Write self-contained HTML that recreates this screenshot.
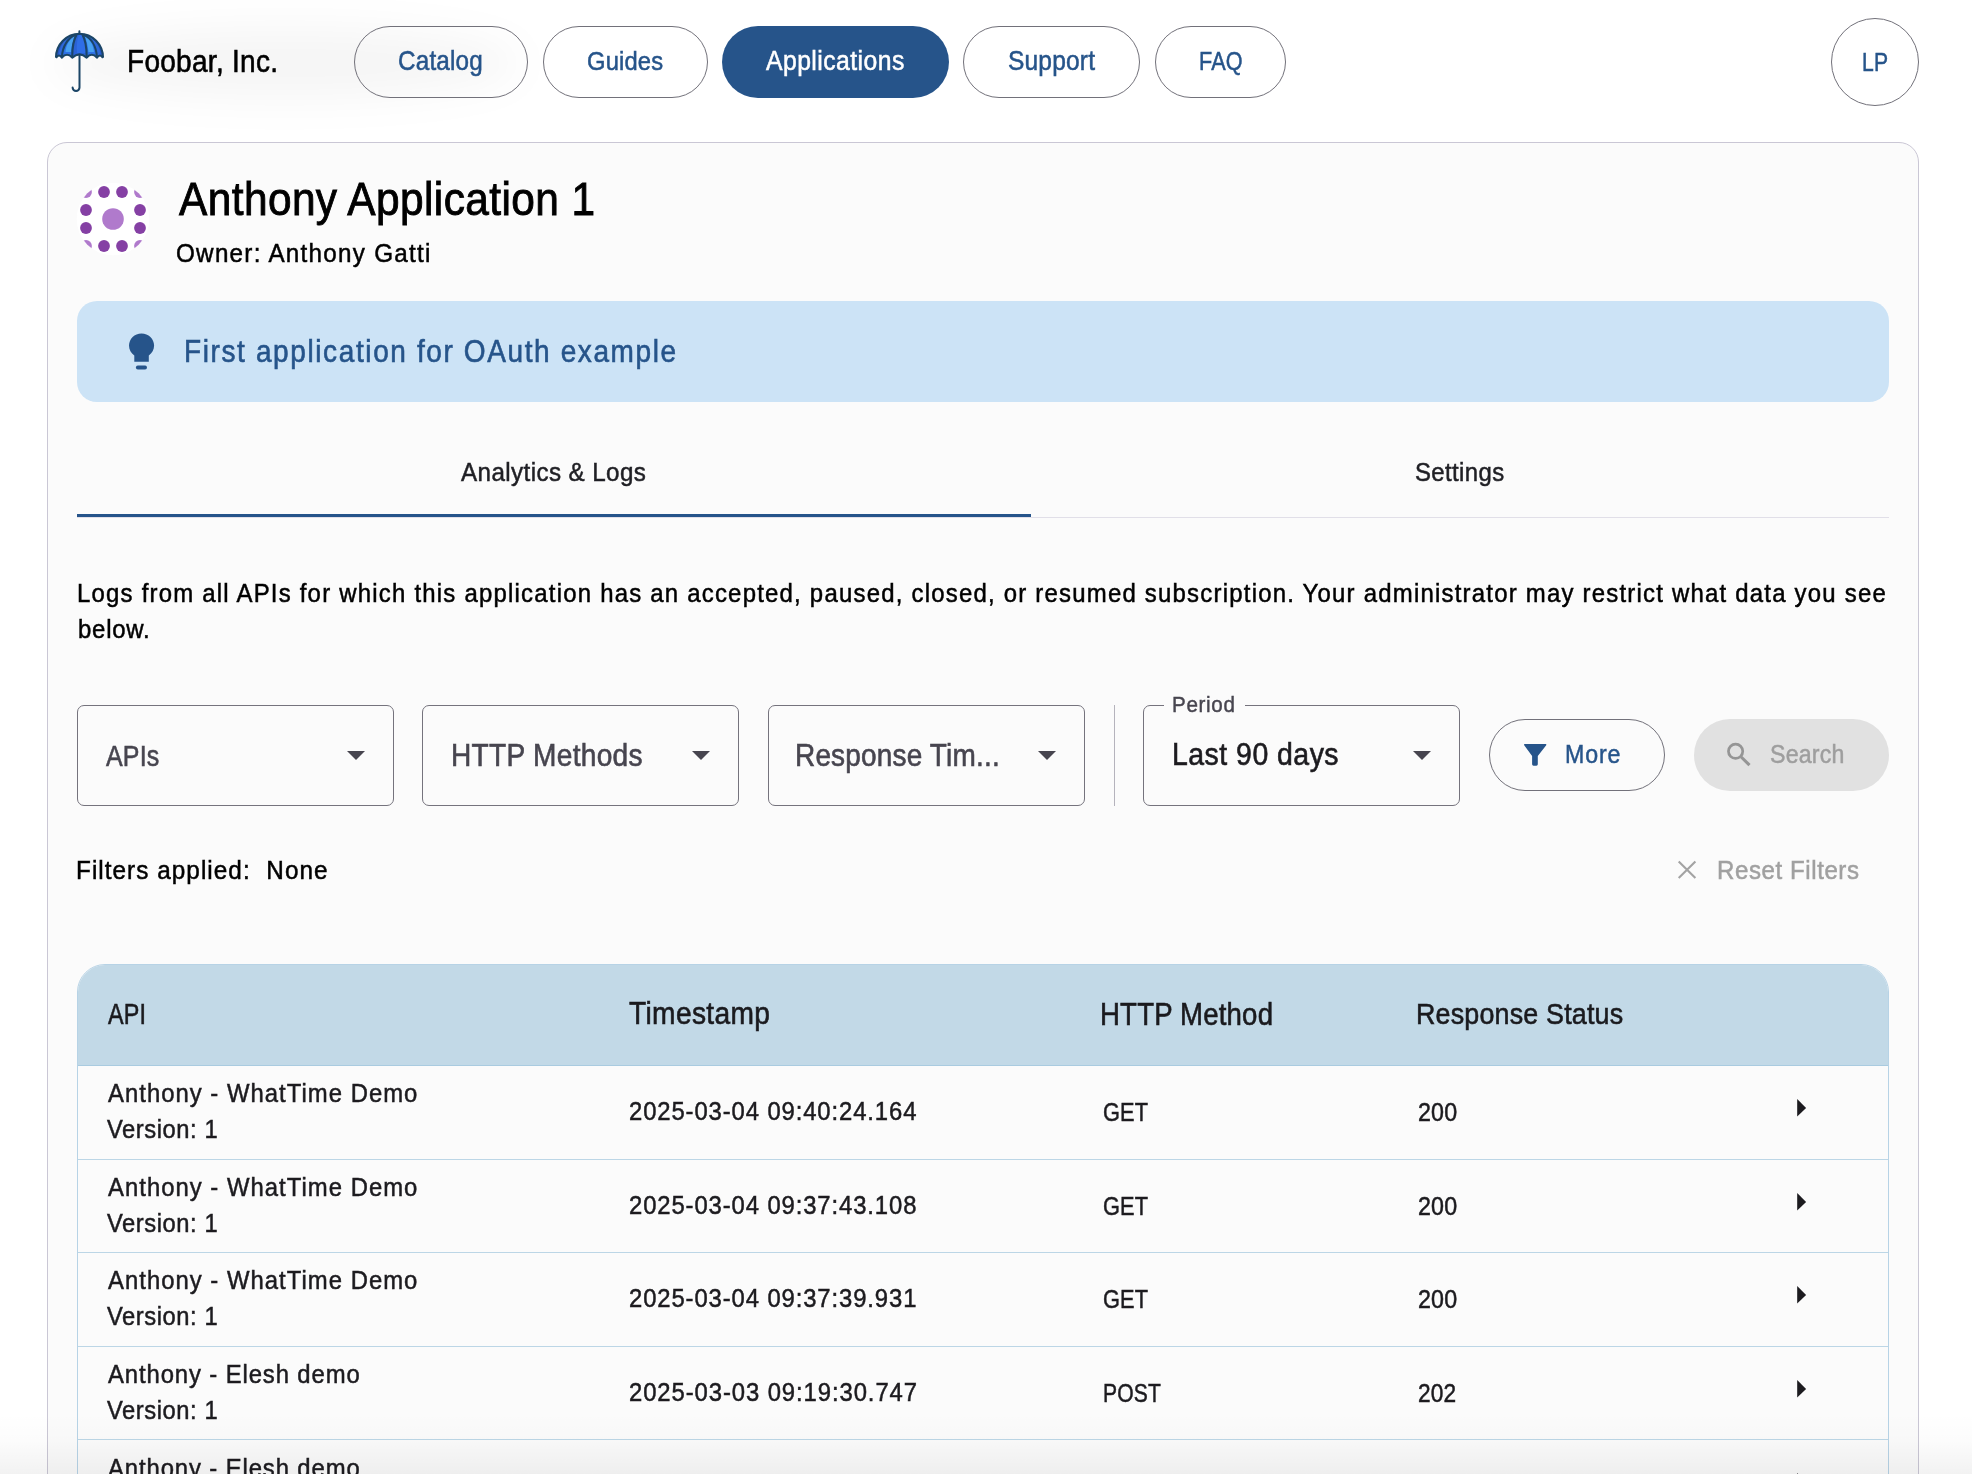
<!DOCTYPE html><html><head><meta charset="utf-8"><style>
html,body{margin:0;padding:0;}
body{width:1972px;height:1474px;position:relative;overflow:hidden;background:#fff;font-family:"Liberation Sans",sans-serif;}
.t{position:absolute;white-space:pre;}
.b{position:absolute;box-sizing:border-box;}
svg{position:absolute;overflow:visible;}
</style></head><body>
<div class="b" style="left:50px;top:28px;width:470px;height:70px;border-radius:50%;background:rgba(0,0,0,0.038);filter:blur(20px);"></div>
<svg style="left:50px;top:28px" width="60" height="68" viewBox="0 0 60 68">
<defs><clipPath id="dome"><path d="M6 29.5 A23.5 23.8 0 0 1 53 29.5 Q50 25.3 46.9 29.2 Q41.8 24 36.7 29.2 Q29.5 23.2 22.2 29.2 Q17 24 11.9 29.2 Q9 25.3 6 29.5 Z"/></clipPath></defs>
<g clip-path="url(#dome)">
<rect x="0" y="0" width="60" height="32" fill="#2455c0"/>
<path d="M8.5 29 C9 19 14 11 22 7.5 L24 7.5 C17 11.5 12.5 19 11.9 29 Z" fill="#2f68d8"/>
<path d="M51 29 C50.5 19 45.5 11 37.5 7.5 L35.5 7.5 C42.5 11.5 46.5 19 46.9 29 Z" fill="#2f68d8"/>
<path d="M11.9 29 C12.5 18 18 10 25.5 6.8 L26.6 6.6 C24 11 22.2 18 22.2 29 Z" fill="#2f72e6"/>
<path d="M15.5 24 C16 17 19.5 11 25 7.5 C23 12 21.5 18 21 24 Z" fill="#48a2f2"/>
<path d="M22.2 29 C22.2 18 24 11 26.6 6.6 L32.4 6.6 C35 11 36.7 18 36.7 29 Z" fill="#2b62d4"/>
<path d="M27 25 C26.5 18 27 11 29 6.6 L32.4 6.6 C35 11 36.7 18 36.7 25 Z" fill="#2f6ee6"/>
<path d="M36.7 29 C36.7 18 35 11 32.4 6.6 L33.7 6.8 C41 10 46.3 18 46.9 29 Z" fill="#2f72e6"/>
<path d="M38.5 24 C38 18 36.5 12 34.5 7.5 C40 11 43.5 17 44 24 Z" fill="#48a2f2"/>
</g>
<path d="M6 29.5 A23.5 23.8 0 0 1 53 29.5" fill="none" stroke="#1b4566" stroke-width="2.1"/>
<path d="M11.9 29 C12.5 18 18 10 25.5 6.8 M22.2 29 C22.2 18 24 11 26.6 6.6 M36.7 29 C36.7 18 35 11 32.4 6.6 M46.9 29 C46.3 18 41 10 33.7 6.8" fill="none" stroke="#1b4566" stroke-width="2.1"/>
<path d="M6 29.8 Q9 25.3 11.9 29.6 Q17 24 22.2 29.6 Q29.5 23.2 36.7 29.6 Q41.8 24 46.9 29.6 Q50 25.3 53 29.8" fill="none" stroke="#1b4566" stroke-width="2.1" stroke-linejoin="round"/>
<path d="M29.4 3.2 V6 M29.5 27 V59.5 A3.45 3.45 0 0 1 22.6 59.5" fill="none" stroke="#1b4566" stroke-width="2" stroke-linecap="round"/>
</svg>
<div class="t " style="left:126.67px;top:45.83px;font-size:30.45px;line-height:30.45px;color:#000;-webkit-text-stroke:0.60px #000;letter-spacing:0.309px;transform:scaleX(0.9200);transform-origin:0 0;">Foobar, Inc.</div>
<div class="b" style="left:354px;top:26px;width:174px;height:72px;border-radius:36px;border:1px solid #72717a;"></div>
<div class="t " style="left:398.44px;top:47.88px;font-size:26.72px;line-height:26.72px;color:#26548a;-webkit-text-stroke:0.52px #26548a;letter-spacing:0.200px;transform:scaleX(0.9080);transform-origin:0 0;">Catalog</div>
<div class="b" style="left:543px;top:26px;width:165px;height:72px;border-radius:36px;border:1px solid #72717a;"></div>
<div class="t " style="left:587.03px;top:47.96px;font-size:26.62px;line-height:26.62px;color:#26548a;-webkit-text-stroke:0.52px #26548a;letter-spacing:0.200px;transform:scaleX(0.8922);transform-origin:0 0;">Guides</div>
<div class="b" style="left:722px;top:26px;width:227px;height:72px;border-radius:36px;background:#26548a;"></div>
<div class="t " style="left:766.14px;top:47.71px;font-size:26.92px;line-height:26.92px;color:#fff;-webkit-text-stroke:0.53px #fff;letter-spacing:0.482px;transform:scaleX(0.9200);transform-origin:0 0;">Applications</div>
<div class="b" style="left:963px;top:26px;width:177px;height:72px;border-radius:36px;border:1px solid #72717a;"></div>
<div class="t " style="left:1007.94px;top:47.83px;font-size:26.79px;line-height:26.79px;color:#26548a;-webkit-text-stroke:0.52px #26548a;letter-spacing:0.200px;transform:scaleX(0.9160);transform-origin:0 0;">Support</div>
<div class="b" style="left:1155px;top:26px;width:131px;height:72px;border-radius:36px;border:1px solid #72717a;"></div>
<div class="t " style="left:1199.01px;top:48.32px;font-size:26.21px;line-height:26.21px;color:#26548a;-webkit-text-stroke:0.51px #26548a;letter-spacing:0.200px;transform:scaleX(0.8266);transform-origin:0 0;">FAQ</div>
<div class="b" style="left:1831px;top:18px;width:88px;height:88px;border-radius:50%;border:1px solid #72717a;"></div>
<div class="t " style="left:1862.41px;top:49.42px;font-size:26.08px;line-height:26.08px;color:#26548a;-webkit-text-stroke:0.51px #26548a;letter-spacing:0.200px;transform:scaleX(0.8096);transform-origin:0 0;">LP</div>
<div class="b" style="left:47px;top:142px;width:1872px;height:1400px;border-radius:20px;border:1px solid #cac7d5;background:#fbfbfb;"></div>
<svg style="left:0;top:0" width="200" height="300" viewBox="0 0 200 300">
<defs><clipPath id="cc"><circle cx="113" cy="219" r="36.3"/></clipPath></defs>
<circle cx="113" cy="219" r="36.3" fill="#fff"/>
<g clip-path="url(#cc)"><circle cx="86" cy="192" r="5.9" fill="#b07acc"/><circle cx="140" cy="192" r="5.9" fill="#b07acc"/><circle cx="86" cy="246" r="5.9" fill="#b07acc"/><circle cx="140" cy="246" r="5.9" fill="#b07acc"/></g><circle cx="104" cy="192" r="5.9" fill="#8540a4"/><circle cx="122" cy="192" r="5.9" fill="#8540a4"/><circle cx="86" cy="210" r="5.9" fill="#8540a4"/><circle cx="140" cy="210" r="5.9" fill="#8540a4"/><circle cx="86" cy="228" r="5.9" fill="#8540a4"/><circle cx="140" cy="228" r="5.9" fill="#8540a4"/><circle cx="104" cy="246" r="5.9" fill="#8540a4"/><circle cx="122" cy="246" r="5.9" fill="#8540a4"/><circle cx="113" cy="219" r="10.8" fill="#b07acc"/>
</svg>
<div class="t " style="left:179.01px;top:175.77px;font-size:46.11px;line-height:46.11px;color:#000;-webkit-text-stroke:0.90px #000;letter-spacing:0.439px;transform:scaleX(0.9200);transform-origin:0 0;">Anthony Application 1</div>
<div class="t " style="left:176.24px;top:240.40px;font-size:26.34px;line-height:26.34px;color:#000;-webkit-text-stroke:0.52px #000;letter-spacing:1.384px;transform:scaleX(0.9200);transform-origin:0 0;">Owner: Anthony Gatti</div>
<div class="b" style="left:77px;top:301px;width:1812px;height:101px;border-radius:20px;background:#cce3f6;"></div>
<svg style="left:120px;top:328px" width="40" height="48" viewBox="0 0 40 48">
<path d="M21.5 5.4 C14.5 5.4 9 10.8 9 17.6 C9 21.8 11.1 25.2 14.3 27.6 L14.3 33.8 L28.8 33.8 L28.8 27.6 C32 25.2 34.1 21.8 34.1 17.6 C34.1 10.8 28.5 5.4 21.5 5.4 Z" fill="#26548a"/>
<rect x="15.9" y="37.6" width="11.1" height="3.8" rx="1.9" fill="#26548a"/>
</svg>
<div class="t " style="left:184.47px;top:335.53px;font-size:30.45px;line-height:30.45px;color:#26548a;-webkit-text-stroke:0.60px #26548a;letter-spacing:1.752px;transform:scaleX(0.9200);transform-origin:0 0;">First application for OAuth example</div>
<div class="t " style="left:461.14px;top:459.12px;font-size:26.32px;line-height:26.32px;color:#1f1f24;-webkit-text-stroke:0.51px #1f1f24;letter-spacing:0.430px;transform:scaleX(0.9200);transform-origin:0 0;">Analytics &amp; Logs</div>
<div class="t " style="left:1415.03px;top:459.48px;font-size:26.01px;line-height:26.01px;color:#1f1f24;-webkit-text-stroke:0.51px #1f1f24;letter-spacing:0.413px;transform:scaleX(0.9200);transform-origin:0 0;">Settings</div>
<div class="b" style="left:77px;top:517px;width:1812px;height:1px;background:#e1dfe8;"></div>
<div class="b" style="left:77px;top:514px;width:954px;height:3px;background:#26548a;"></div>
<div class="t " style="left:77.23px;top:580.18px;font-size:26.02px;line-height:26.02px;color:#000;-webkit-text-stroke:0.51px #000;letter-spacing:1.328px;transform:scaleX(0.9200);transform-origin:0 0;">Logs from all APIs for which this application has an accepted, paused, closed, or resumed subscription. Your administrator may restrict what data you see</div>
<div class="t " style="left:78.23px;top:616.28px;font-size:26.02px;line-height:26.02px;color:#000;-webkit-text-stroke:0.51px #000;letter-spacing:0.820px;transform:scaleX(0.9200);transform-origin:0 0;">below.</div>
<div class="b" style="left:77px;top:705px;width:317px;height:101px;border-radius:7px;border:1px solid #75737d;"></div>
<div class="t " style="left:106.04px;top:740.51px;font-size:30.11px;line-height:30.11px;color:#47454f;-webkit-text-stroke:0.59px #47454f;letter-spacing:0.200px;transform:scaleX(0.8290);transform-origin:0 0;">APIs</div>
<svg style="left:347px;top:751px" width="18" height="9" viewBox="0 0 18 9"><path d="M0 0 H18 L9 9 Z" fill="#47454f"/></svg>
<div class="b" style="left:422px;top:705px;width:317px;height:101px;border-radius:7px;border:1px solid #75737d;"></div>
<div class="t " style="left:450.68px;top:740.12px;font-size:30.57px;line-height:30.57px;color:#47454f;-webkit-text-stroke:0.60px #47454f;letter-spacing:0.299px;transform:scaleX(0.9200);transform-origin:0 0;">HTTP Methods</div>
<svg style="left:692px;top:751px" width="18" height="9" viewBox="0 0 18 9"><path d="M0 0 H18 L9 9 Z" fill="#47454f"/></svg>
<div class="b" style="left:768px;top:705px;width:317px;height:101px;border-radius:7px;border:1px solid #75737d;"></div>
<div class="t " style="left:795.07px;top:740.16px;font-size:30.53px;line-height:30.53px;color:#47454f;-webkit-text-stroke:0.60px #47454f;letter-spacing:0.200px;transform:scaleX(0.9166);transform-origin:0 0;">Response Tim...</div>
<svg style="left:1038px;top:751px" width="18" height="9" viewBox="0 0 18 9"><path d="M0 0 H18 L9 9 Z" fill="#47454f"/></svg>
<div class="b" style="left:1114px;top:705px;width:1px;height:101px;background:#b5b3bc;"></div>
<div class="b" style="left:1143px;top:705px;width:317px;height:101px;border-radius:7px;border:1px solid #75737d;"></div>
<div class="b" style="left:1164px;top:700px;width:81px;height:10px;background:#fbfbfb;"></div>
<div class="t " style="left:1171.60px;top:693.73px;font-size:22.41px;line-height:22.41px;color:#47454f;-webkit-text-stroke:0.44px #47454f;letter-spacing:0.718px;transform:scaleX(0.9200);transform-origin:0 0;">Period</div>
<div class="t " style="left:1171.68px;top:740.32px;font-size:30.93px;line-height:30.93px;color:#1c1b1f;-webkit-text-stroke:0.61px #1c1b1f;letter-spacing:0.522px;transform:scaleX(0.9200);transform-origin:0 0;">Last 90 days</div>
<svg style="left:1413px;top:751px" width="18" height="9" viewBox="0 0 18 9"><path d="M0 0 H18 L9 9 Z" fill="#47454f"/></svg>
<div class="b" style="left:1489px;top:719px;width:176px;height:72px;border-radius:36px;border:1px solid #72717a;"></div>
<svg style="left:1520px;top:740px" width="30" height="30" viewBox="0 0 30 30">
<path d="M4.6 4.1 H25.8 Q26.8 4.1 26.2 5.2 L17.8 15.9 V24.3 Q17.8 25.7 16.4 25.7 H13.5 Q12.1 25.7 12.1 24.3 V15.9 L4.2 5.2 Q3.6 4.1 4.6 4.1 Z" fill="#26548a"/>
</svg>
<div class="t " style="left:1564.63px;top:741.96px;font-size:25.21px;line-height:25.21px;color:#26548a;-webkit-text-stroke:0.49px #26548a;letter-spacing:0.912px;transform:scaleX(0.9200);transform-origin:0 0;">More</div>
<div class="b" style="left:1694px;top:719px;width:195px;height:72px;border-radius:36px;background:#e1e1e1;"></div>
<svg style="left:1720px;top:735px" width="40" height="40" viewBox="0 0 40 40">
<circle cx="15.6" cy="16.3" r="7.15" fill="none" stroke="#959595" stroke-width="2.7"/>
<path d="M21.2 22 L29.5 30.1" stroke="#959595" stroke-width="3.1"/>
</svg>
<div class="t " style="left:1770.03px;top:741.99px;font-size:25.18px;line-height:25.18px;color:#9e9e9e;-webkit-text-stroke:0.49px #9e9e9e;letter-spacing:0.233px;transform:scaleX(0.9200);transform-origin:0 0;">Search</div>
<div class="t " style="left:76.44px;top:856.72px;font-size:26.43px;line-height:26.43px;color:#000;-webkit-text-stroke:0.52px #000;letter-spacing:1.131px;transform:scaleX(0.9200);transform-origin:0 0;">Filters applied:  None</div>
<svg style="left:1667px;top:850px" width="40" height="40" viewBox="0 0 40 40">
<path d="M11.7 11.4 L28.4 28.1 M28.4 11.4 L11.7 28.1" stroke="#a3a3a3" stroke-width="2.1"/>
</svg>
<div class="t " style="left:1717.24px;top:857.04px;font-size:26.18px;line-height:26.18px;color:#a0a0a0;-webkit-text-stroke:0.51px #a0a0a0;letter-spacing:0.620px;transform:scaleX(0.9200);transform-origin:0 0;">Reset Filters</div>
<div class="b" style="left:77px;top:964px;width:1812px;height:600px;border:1px solid #b7d3e6;border-radius:28px 28px 0 0;background:#fbfbfb;overflow:hidden;"></div>
<div class="b" style="left:78px;top:965px;width:1810px;height:100px;background:#c2d9e7;border-radius:27px 27px 0 0;"></div>
<div class="b" style="left:78px;top:1065px;width:1810px;height:1px;background:#a9cbe0;"></div>
<div class="t " style="left:107.63px;top:998.83px;font-size:29.86px;line-height:29.86px;color:#1a1a1e;-webkit-text-stroke:0.58px #1a1a1e;letter-spacing:0.200px;transform:scaleX(0.7819);transform-origin:0 0;">API</div>
<div class="t " style="left:628.88px;top:998.37px;font-size:30.63px;line-height:30.63px;color:#1a1a1e;-webkit-text-stroke:0.60px #1a1a1e;letter-spacing:0.372px;transform:scaleX(0.9200);transform-origin:0 0;">Timestamp</div>
<div class="t " style="left:1100.27px;top:998.53px;font-size:30.44px;line-height:30.44px;color:#1a1a1e;-webkit-text-stroke:0.60px #1a1a1e;letter-spacing:0.200px;transform:scaleX(0.9061);transform-origin:0 0;">HTTP Method</div>
<div class="t " style="left:1416.06px;top:998.61px;font-size:30.35px;line-height:30.35px;color:#1a1a1e;-webkit-text-stroke:0.59px #1a1a1e;letter-spacing:0.200px;transform:scaleX(0.8857);transform-origin:0 0;">Response Status</div>
<div class="t " style="left:107.73px;top:1080.83px;font-size:25.95px;line-height:25.95px;color:#1c1b1f;-webkit-text-stroke:0.51px #1c1b1f;letter-spacing:1.111px;transform:scaleX(0.9200);transform-origin:0 0;">Anthony - WhatTime Demo</div>
<div class="t " style="left:107.13px;top:1116.96px;font-size:25.80px;line-height:25.80px;color:#1c1b1f;-webkit-text-stroke:0.50px #1c1b1f;letter-spacing:0.613px;transform:scaleX(0.9200);transform-origin:0 0;">Version: 1</div>
<div class="t " style="left:628.83px;top:1098.86px;font-size:25.92px;line-height:25.92px;color:#1c1b1f;-webkit-text-stroke:0.51px #1c1b1f;letter-spacing:0.974px;transform:scaleX(0.9200);transform-origin:0 0;">2025-03-04 09:40:24.164</div>
<div class="t " style="left:1102.51px;top:1099.76px;font-size:25.44px;line-height:25.44px;color:#1c1b1f;-webkit-text-stroke:0.50px #1c1b1f;letter-spacing:0.200px;transform:scaleX(0.8551);transform-origin:0 0;">GET</div>
<div class="t " style="left:1417.53px;top:1099.55px;font-size:25.70px;line-height:25.70px;color:#1c1b1f;-webkit-text-stroke:0.50px #1c1b1f;letter-spacing:0.200px;transform:scaleX(0.9048);transform-origin:0 0;">200</div>
<svg style="left:1797px;top:1098.6px" width="10" height="18" viewBox="0 0 10 18"><path d="M0.2 0 L9.1 9 L0.2 17.5 Z" fill="#1c1b1f"/></svg>
<div class="b" style="left:78px;top:1159px;width:1810px;height:1px;background:#bcd6e6;"></div>
<div class="t " style="left:107.73px;top:1174.83px;font-size:25.95px;line-height:25.95px;color:#1c1b1f;-webkit-text-stroke:0.51px #1c1b1f;letter-spacing:1.111px;transform:scaleX(0.9200);transform-origin:0 0;">Anthony - WhatTime Demo</div>
<div class="t " style="left:107.13px;top:1210.96px;font-size:25.80px;line-height:25.80px;color:#1c1b1f;-webkit-text-stroke:0.50px #1c1b1f;letter-spacing:0.613px;transform:scaleX(0.9200);transform-origin:0 0;">Version: 1</div>
<div class="t " style="left:628.83px;top:1192.86px;font-size:25.92px;line-height:25.92px;color:#1c1b1f;-webkit-text-stroke:0.51px #1c1b1f;letter-spacing:0.974px;transform:scaleX(0.9200);transform-origin:0 0;">2025-03-04 09:37:43.108</div>
<div class="t " style="left:1102.51px;top:1193.76px;font-size:25.44px;line-height:25.44px;color:#1c1b1f;-webkit-text-stroke:0.50px #1c1b1f;letter-spacing:0.200px;transform:scaleX(0.8551);transform-origin:0 0;">GET</div>
<div class="t " style="left:1417.53px;top:1193.55px;font-size:25.70px;line-height:25.70px;color:#1c1b1f;-webkit-text-stroke:0.50px #1c1b1f;letter-spacing:0.200px;transform:scaleX(0.9048);transform-origin:0 0;">200</div>
<svg style="left:1797px;top:1192.6px" width="10" height="18" viewBox="0 0 10 18"><path d="M0.2 0 L9.1 9 L0.2 17.5 Z" fill="#1c1b1f"/></svg>
<div class="b" style="left:78px;top:1252px;width:1810px;height:1px;background:#bcd6e6;"></div>
<div class="t " style="left:107.73px;top:1267.83px;font-size:25.95px;line-height:25.95px;color:#1c1b1f;-webkit-text-stroke:0.51px #1c1b1f;letter-spacing:1.111px;transform:scaleX(0.9200);transform-origin:0 0;">Anthony - WhatTime Demo</div>
<div class="t " style="left:107.13px;top:1303.96px;font-size:25.80px;line-height:25.80px;color:#1c1b1f;-webkit-text-stroke:0.50px #1c1b1f;letter-spacing:0.613px;transform:scaleX(0.9200);transform-origin:0 0;">Version: 1</div>
<div class="t " style="left:628.83px;top:1285.86px;font-size:25.92px;line-height:25.92px;color:#1c1b1f;-webkit-text-stroke:0.51px #1c1b1f;letter-spacing:0.974px;transform:scaleX(0.9200);transform-origin:0 0;">2025-03-04 09:37:39.931</div>
<div class="t " style="left:1102.51px;top:1286.76px;font-size:25.44px;line-height:25.44px;color:#1c1b1f;-webkit-text-stroke:0.50px #1c1b1f;letter-spacing:0.200px;transform:scaleX(0.8551);transform-origin:0 0;">GET</div>
<div class="t " style="left:1417.53px;top:1286.55px;font-size:25.70px;line-height:25.70px;color:#1c1b1f;-webkit-text-stroke:0.50px #1c1b1f;letter-spacing:0.200px;transform:scaleX(0.9048);transform-origin:0 0;">200</div>
<svg style="left:1797px;top:1285.6px" width="10" height="18" viewBox="0 0 10 18"><path d="M0.2 0 L9.1 9 L0.2 17.5 Z" fill="#1c1b1f"/></svg>
<div class="b" style="left:78px;top:1346px;width:1810px;height:1px;background:#bcd6e6;"></div>
<div class="t " style="left:107.73px;top:1361.85px;font-size:25.93px;line-height:25.93px;color:#1c1b1f;-webkit-text-stroke:0.51px #1c1b1f;letter-spacing:0.975px;transform:scaleX(0.9200);transform-origin:0 0;">Anthony - Elesh demo</div>
<div class="t " style="left:107.13px;top:1397.96px;font-size:25.80px;line-height:25.80px;color:#1c1b1f;-webkit-text-stroke:0.50px #1c1b1f;letter-spacing:0.613px;transform:scaleX(0.9200);transform-origin:0 0;">Version: 1</div>
<div class="t " style="left:628.83px;top:1379.85px;font-size:25.93px;line-height:25.93px;color:#1c1b1f;-webkit-text-stroke:0.51px #1c1b1f;letter-spacing:0.995px;transform:scaleX(0.9200);transform-origin:0 0;">2025-03-03 09:19:30.747</div>
<div class="t " style="left:1102.51px;top:1380.85px;font-size:25.34px;line-height:25.34px;color:#1c1b1f;-webkit-text-stroke:0.50px #1c1b1f;letter-spacing:0.200px;transform:scaleX(0.8319);transform-origin:0 0;">POST</div>
<div class="t " style="left:1417.52px;top:1380.63px;font-size:25.60px;line-height:25.60px;color:#1c1b1f;-webkit-text-stroke:0.50px #1c1b1f;letter-spacing:0.200px;transform:scaleX(0.8853);transform-origin:0 0;">202</div>
<svg style="left:1797px;top:1379.6px" width="10" height="18" viewBox="0 0 10 18"><path d="M0.2 0 L9.1 9 L0.2 17.5 Z" fill="#1c1b1f"/></svg>
<div class="b" style="left:78px;top:1439px;width:1810px;height:1px;background:#bcd6e6;"></div>
<div class="t " style="left:107.73px;top:1455.65px;font-size:25.93px;line-height:25.93px;color:#1c1b1f;-webkit-text-stroke:0.51px #1c1b1f;letter-spacing:0.975px;transform:scaleX(0.9200);transform-origin:0 0;">Anthony - Elesh demo</div>
<div class="t " style="left:107.13px;top:1491.76px;font-size:25.80px;line-height:25.80px;color:#1c1b1f;-webkit-text-stroke:0.50px #1c1b1f;letter-spacing:0.613px;transform:scaleX(0.9200);transform-origin:0 0;">Version: 1</div>
<div class="t " style="left:628.83px;top:1473.65px;font-size:25.93px;line-height:25.93px;color:#1c1b1f;-webkit-text-stroke:0.51px #1c1b1f;letter-spacing:0.995px;transform:scaleX(0.9200);transform-origin:0 0;">2025-03-03 09:19:30.747</div>
<div class="t " style="left:1102.51px;top:1474.65px;font-size:25.34px;line-height:25.34px;color:#1c1b1f;-webkit-text-stroke:0.50px #1c1b1f;letter-spacing:0.200px;transform:scaleX(0.8319);transform-origin:0 0;">POST</div>
<div class="t " style="left:1417.52px;top:1474.43px;font-size:25.60px;line-height:25.60px;color:#1c1b1f;-webkit-text-stroke:0.50px #1c1b1f;letter-spacing:0.200px;transform:scaleX(0.8853);transform-origin:0 0;">202</div>
<svg style="left:1797px;top:1472.6px" width="10" height="18" viewBox="0 0 10 18"><path d="M0.2 0 L9.1 9 L0.2 17.5 Z" fill="#1c1b1f"/></svg>
<div class="b" style="left:0;top:1412px;width:1972px;height:62px;background:linear-gradient(to bottom,rgba(0,0,0,0) 0%,rgba(0,0,0,0.012) 45%,rgba(0,0,0,0.05) 100%);"></div>
</body></html>
